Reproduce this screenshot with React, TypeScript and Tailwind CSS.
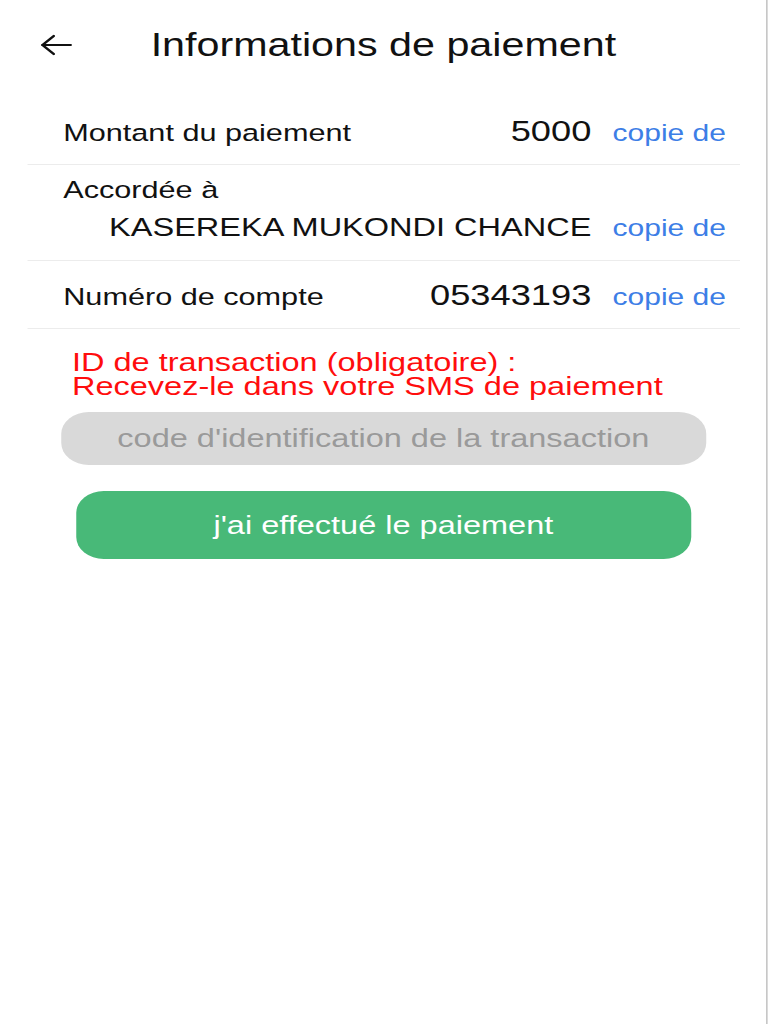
import React from 'react';

// The screenshot is stretched horizontally (~1.25x), so the page is laid out at
// 768 / 1.25 px wide and scaled on the x axis only.

function BackArrow() {
  return (
    <svg width="26" height="22" viewBox="0 0 26 22" fill="none" stroke="#111" strokeWidth="2.2" strokeLinecap="round" strokeLinejoin="round">
      <path d="M24.5 11H2" />
      <path d="M11 2L2 11L11 20" />
    </svg>
  );
}

function CopyLink() {
  return <span className="ml-[17px] text-[24px] text-[#3d7ee6]">copie de</span>;
}

function App() {
  return (
    <div
      className="w-[614.4px] min-h-[1024px] origin-top-left scale-x-[1.25] bg-white border-r border-[#b5b5b5] text-[#111]"
      style={{ fontFamily: '"Liberation Sans", Arial, Helvetica, sans-serif' }}
    >
      <header className="relative flex h-[90px] items-center justify-center">
        <button className="absolute left-[32px] top-[34px]">
          <BackArrow />
        </button>
        <h1 className="text-[33px] font-normal">Informations de paiement</h1>
      </header>

      <div className="mt-[10px] px-[21.6px]">
        <div className="flex h-[65px] items-center border-b border-[#ececec] pl-[29px] pr-[11px]">
          <div className="flex w-full items-baseline">
            <span className="flex-1 text-[24.5px]">Montant du paiement</span>
            <span className="text-[29px]">5000</span>
            <CopyLink />
          </div>
        </div>

        <div className="flex h-[96px] flex-col border-b border-[#ececec] pl-[29px] pr-[11px] pt-[10px]">
          <div className="flex h-[30px] items-center text-[24.5px]">Accordée à</div>
          <div className="mt-[3px] flex h-[30px] items-baseline justify-end">
            <span className="text-[26px]">KASEREKA MUKONDI CHANCE</span>
            <CopyLink />
          </div>
        </div>

        <div className="flex h-[68px] items-center border-b border-[#ececec] pl-[29px] pr-[11px] pt-[3px]">
          <div className="flex w-full items-baseline">
            <span className="flex-1 text-[24.5px]">Numéro de compte</span>
            <span className="text-[29px]">05343193</span>
            <CopyLink />
          </div>
        </div>

        <p className="mt-[22px] pl-[36px] text-[26px] leading-[23.5px] text-[#ff0d0d]">
          ID de transaction (obligatoire) :
          <br />
          Recevez-le dans votre SMS de paiement
        </p>
      </div>

      <input
        type="text"
        placeholder="code d'identification de la transaction"
        className="mx-auto mt-[14px] block h-[53px] w-[516px] rounded-[22px] bg-[#d9d9d9] text-center text-[26px] text-[#333] outline-none placeholder:text-[#9a9a9a]"
      />

      <button className="mx-auto mt-[26px] block h-[68px] w-[492px] rounded-[22px] bg-[#48b978] text-[26px] text-white">
        j'ai effectué le paiement
      </button>
    </div>
  );
}

export default App;
